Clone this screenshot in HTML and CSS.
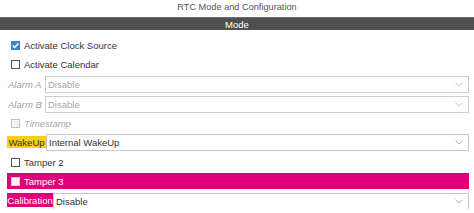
FILE: index.html
```html
<!DOCTYPE html>
<html>
<head>
  <title>RTC Mode and Configuration</title>
  <link rel="stylesheet" href="styles.css">
</head>
<body>
  <div class="panel">
    <div class="title">RTC Mode and Configuration</div>
    <div class="section-bar">Mode</div>

    <div class="options">
      <div class="row row-check first">
        <span class="box box-checked">
          <svg width="9" height="9" viewBox="0 0 9 9"><path d="M1.8 4.6 L3.7 6.5 L7.3 2.4" fill="none" stroke="#fff" stroke-width="1.5"/></svg>
        </span>
        <span class="text">Activate Clock Source</span>
      </div>

      <div class="row row-check short">
        <span class="box"></span>
        <span class="text">Activate Calendar</span>
      </div>

      <div class="row row-select">
        <span class="label label-off">Alarm A</span>
        <div class="select select-off">
          <span class="value">Disable</span>
          <svg class="chevron" width="8" height="5" viewBox="0 0 8 5"><path d="M0.5 0.8 L4 4 L7.5 0.8" fill="none" stroke="#c4c4c4" stroke-width="1"/></svg>
        </div>
      </div>

      <div class="row row-select">
        <span class="label label-off">Alarm B</span>
        <div class="select select-off">
          <span class="value">Disable</span>
          <svg class="chevron" width="8" height="5" viewBox="0 0 8 5"><path d="M0.5 0.8 L4 4 L7.5 0.8" fill="none" stroke="#c4c4c4" stroke-width="1"/></svg>
        </div>
      </div>

      <div class="row row-check tight">
        <span class="box box-off"></span>
        <span class="text text-off">Timestamp</span>
      </div>

      <div class="row row-select">
        <span class="label label-yellow">WakeUp</span>
        <div class="select">
          <span class="value">Internal WakeUp</span>
          <svg class="chevron" width="8" height="5" viewBox="0 0 8 5"><path d="M0.5 0.8 L4 4 L7.5 0.8" fill="none" stroke="#b0b0b0" stroke-width="1"/></svg>
        </div>
      </div>

      <div class="row row-check">
        <span class="box"></span>
        <span class="text">Tamper 2</span>
      </div>

      <div class="row row-check row-pink">
        <span class="box box-pink"></span>
        <span class="text">Tamper 3</span>
      </div>

      <div class="row row-select last">
        <span class="label label-pink">Calibration</span>
        <div class="select">
          <span class="value">Disable</span>
          <svg class="chevron" width="8" height="5" viewBox="0 0 8 5"><path d="M0.5 0.8 L4 4 L7.5 0.8" fill="none" stroke="#b0b0b0" stroke-width="1"/></svg>
        </div>
      </div>
    </div>
  </div>
</body>
</html>
```

FILE: styles.css
```css
body {
  margin: 0;
  padding: 0;
  background-color: #ffffff;
  font-family: "Liberation Sans", Arial, sans-serif;
  font-size: 9.5px;
  color: #333333;
}

.panel {
  width: 474px;
}

.title {
  height: 15px;
  line-height: 15px;
  text-align: center;
  font-size: 9.2px;
  color: #555555;
  margin-bottom: 2px;
}

.section-bar {
  height: 13px;
  line-height: 13px;
  background-color: #4f4f4f;
  border-top: 1px solid #6a6a6a;
  box-sizing: border-box;
  color: #ffffff;
  text-align: center;
}

.options {
  display: flex;
  flex-direction: column;
  padding: 0 5px 0 7px;
}

.row {
  display: flex;
  align-items: center;
  height: 20px;
}

.row.first {
  margin-top: 5px;
}

.row.short {
  height: 19px;
}

.row.tight {
  height: 18px;
}

.row-check {
  padding-left: 4px;
}

.row-check .text {
  margin-left: 4px;
}

.text-off {
  color: #a8a8a8;
  font-style: italic;
}

.box {
  width: 9px;
  height: 9px;
  border: 1px solid #555555;
  background-color: #ffffff;
  box-sizing: border-box;
  display: flex;
  align-items: center;
  justify-content: center;
}

.box-checked {
  border-color: #3b86c8;
  background-color: #3b86c8;
}

.box-checked svg {
  flex: none;
}

.box-off {
  border-color: #c2c2c2;
  background-color: #f2f2f2;
}

.box-pink {
  border-color: #f3b5d6;
  background-color: #f5f5f5;
}

.row-pink {
  height: 16px;
  margin-top: 1px;
  margin-bottom: 4px;
  background-color: #e2007a;
  color: #ffffff;
}

.row.last {
  height: 16px;
  align-items: stretch;
}

.label {
  display: flex;
  align-items: center;
  justify-content: center;
  flex: none;
}

.label-off {
  width: 37px;
  color: #a0a0a0;
  font-style: italic;
  justify-content: flex-start;
  padding-left: 1px;
}

.label-yellow {
  width: 39px;
  height: 12px;
  background-color: #f7cf14;
  color: #333333;
}

.label-pink {
  width: 46px;
  height: 14px;
  background-color: #e2007a;
  color: #ffffff;
}

.select {
  flex: 1;
  height: 17px;
  border: 1px solid #c6c6c6;
  box-sizing: border-box;
  display: flex;
  align-items: center;
  justify-content: space-between;
  padding: 0 5px 0 2px;
  background-color: #ffffff;
}

.select-off {
  height: 17px;
  border-color: #cfcfcf;
}

.select-off .value {
  color: #a8a8a8;
}

.chevron {
  flex: none;
}
```
